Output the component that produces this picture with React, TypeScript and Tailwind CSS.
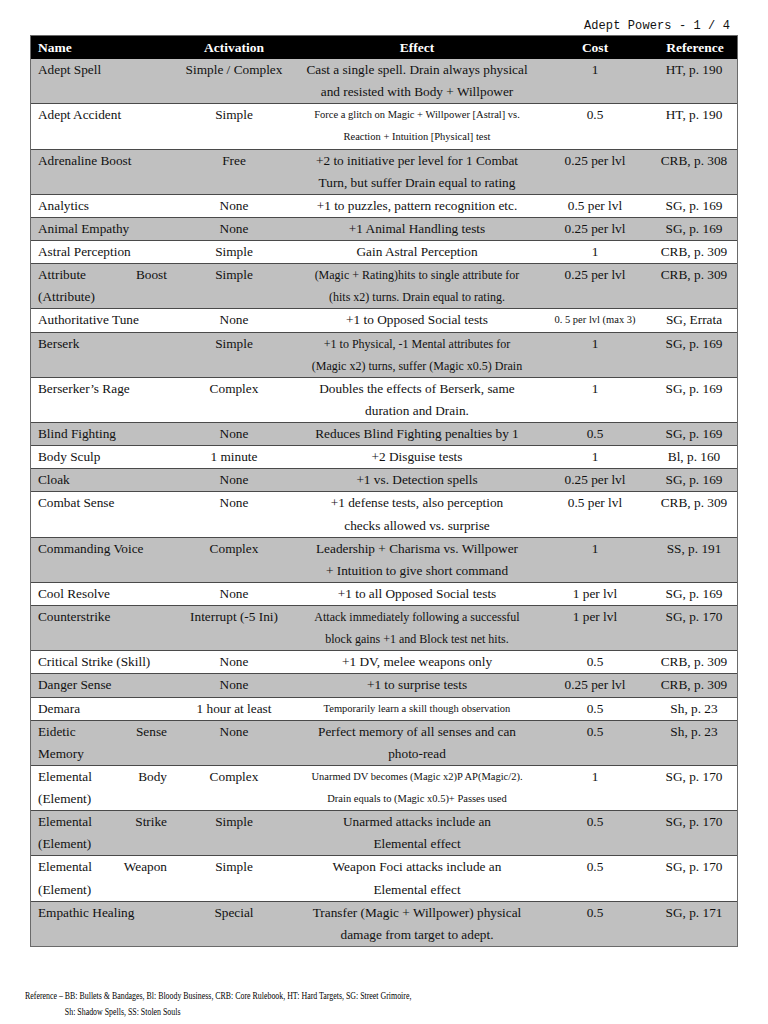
import React from "react";

type Row = {
  name: string | [string, string, string];
  act: string;
  eff: string[];
  effSize?: "sm" | "xs";
  cost: string;
  costSmall?: boolean;
  ref: string;
};

const rows: Row[] = [
  { name: "Adept Spell", act: "Simple / Complex", eff: ["Cast a single spell. Drain always physical", "and resisted with Body + Willpower"], cost: "1", ref: "HT, p. 190" },
  { name: "Adept Accident", act: "Simple", eff: ["Force a glitch on Magic + Willpower [Astral] vs.", "Reaction + Intuition [Physical] test"], effSize: "xs", cost: "0.5", ref: "HT, p. 190" },
  { name: "Adrenaline Boost", act: "Free", eff: ["+2 to initiative per level for 1 Combat", "Turn, but suffer Drain equal to rating"], cost: "0.25 per lvl", ref: "CRB, p. 308" },
  { name: "Analytics", act: "None", eff: ["+1 to puzzles, pattern recognition etc."], cost: "0.5 per lvl", ref: "SG, p. 169" },
  { name: "Animal Empathy", act: "None", eff: ["+1 Animal Handling tests"], cost: "0.25 per lvl", ref: "SG, p. 169" },
  { name: "Astral Perception", act: "Simple", eff: ["Gain Astral Perception"], cost: "1", ref: "CRB, p. 309" },
  { name: ["Attribute", "Boost", "(Attribute)"], act: "Simple", eff: ["(Magic + Rating)hits to single attribute for", "(hits x2) turns. Drain equal to rating."], effSize: "sm", cost: "0.25 per lvl", ref: "CRB, p. 309" },
  { name: "Authoritative Tune", act: "None", eff: ["+1 to Opposed Social tests"], cost: "0. 5 per lvl (max 3)", costSmall: true, ref: "SG, Errata" },
  { name: "Berserk", act: "Simple", eff: ["+1 to Physical, -1 Mental attributes for", "(Magic x2) turns, suffer (Magic x0.5) Drain"], effSize: "sm", cost: "1", ref: "SG, p. 169" },
  { name: "Berserker\u2019s Rage", act: "Complex", eff: ["Doubles the effects of Berserk, same", "duration and Drain."], cost: "1", ref: "SG, p. 169" },
  { name: "Blind Fighting", act: "None", eff: ["Reduces Blind Fighting penalties by 1"], cost: "0.5", ref: "SG, p. 169" },
  { name: "Body Sculp", act: "1 minute", eff: ["+2 Disguise tests"], cost: "1", ref: "Bl, p. 160" },
  { name: "Cloak", act: "None", eff: ["+1 vs. Detection spells"], cost: "0.25 per lvl", ref: "SG, p. 169" },
  { name: "Combat Sense", act: "None", eff: ["+1 defense tests, also perception", "checks allowed vs. surprise"], cost: "0.5 per lvl", ref: "CRB, p. 309" },
  { name: "Commanding Voice", act: "Complex", eff: ["Leadership + Charisma vs. Willpower", "+ Intuition to give short command"], cost: "1", ref: "SS, p. 191" },
  { name: "Cool Resolve", act: "None", eff: ["+1 to all Opposed Social tests"], cost: "1 per lvl", ref: "SG, p. 169" },
  { name: "Counterstrike", act: "Interrupt (-5 Ini)", eff: ["Attack immediately following a successful", "block gains +1 and Block test net hits."], effSize: "sm", cost: "1 per lvl", ref: "SG, p. 170" },
  { name: "Critical Strike (Skill)", act: "None", eff: ["+1 DV, melee weapons only"], cost: "0.5", ref: "CRB, p. 309" },
  { name: "Danger Sense", act: "None", eff: ["+1 to surprise tests"], cost: "0.25 per lvl", ref: "CRB, p. 309" },
  { name: "Demara", act: "1 hour at least", eff: ["Temporarily learn a skill though observation"], effSize: "xs", cost: "0.5", ref: "Sh, p. 23" },
  { name: ["Eidetic", "Sense", "Memory"], act: "None", eff: ["Perfect memory of all senses and can", "photo-read"], cost: "0.5", ref: "Sh, p. 23" },
  { name: ["Elemental", "Body", "(Element)"], act: "Complex", eff: ["Unarmed DV becomes (Magic x2)P AP(Magic/2).", "Drain equals to (Magic x0.5)+ Passes used"], effSize: "xs", cost: "1", ref: "SG, p. 170" },
  { name: ["Elemental", "Strike", "(Element)"], act: "Simple", eff: ["Unarmed attacks include an", "Elemental effect"], cost: "0.5", ref: "SG, p. 170" },
  { name: ["Elemental", "Weapon", "(Element)"], act: "Simple", eff: ["Weapon Foci attacks include an", "Elemental effect"], cost: "0.5", ref: "SG, p. 170" },
  { name: "Empathic Healing", act: "Special", eff: ["Transfer (Magic + Willpower) physical", "damage from target to adept."], cost: "0.5", ref: "SG, p. 171" },
];

const gridCols = "grid grid-cols-[142px_122px_244px_112px_88px]";

function NameCell({ name }: { name: Row["name"] }) {
  if (typeof name === "string") {
    return <div className="pl-[7px] pr-[4px] whitespace-nowrap">{name}</div>;
  }
  return (
    <div className="pl-[7px] pr-[6px]">
      <div className="flex justify-between">
        <span>{name[0]}</span>
        <span>{name[1]}</span>
      </div>
      <div>{name[2]}</div>
    </div>
  );
}

export default function App() {
  return (
    <div
      className="w-[768px] h-[1024px] bg-white text-[#111] relative overflow-hidden"
      style={{ fontFamily: '"Liberation Serif", "Times New Roman", serif' }}
    >
      <div className="pt-[18px] px-[30px]">
        <div
          className="text-right pr-[8px] text-[12px] leading-[16px] tracking-[0.1px] text-[#111]"
          style={{ fontFamily: '"Liberation Mono", monospace' }}
        >
          Adept Powers - 1 / 4
        </div>
        <div className="mt-[1px] w-[708px] border border-[#6a6a6a] text-[13.3px]">
          <div className={`${gridCols} bg-black text-white font-bold leading-[23px] text-[13.5px]`}>
            <div className="pl-[7px]">Name</div>
            <div className="text-center">Activation</div>
            <div className="text-center">Effect</div>
            <div className="text-center">Cost</div>
            <div className="text-center">Reference</div>
          </div>
          {rows.map((r, i) => (
            <div
              key={i}
              className={`${gridCols} leading-[22.12px] ${i % 2 === 0 ? "bg-[#c0c0c0]" : "bg-white"} ${
                i < rows.length - 1 ? "border-b border-[#4a4a4a]" : ""
              }`}
            >
              <NameCell name={r.name} />
              <div className="text-center whitespace-nowrap">{r.act}</div>
              <div
                className={`text-center whitespace-nowrap ${
                  r.effSize === "xs" ? "text-[10.5px]" : r.effSize === "sm" ? "text-[12px]" : ""
                }`}
              >
                {r.eff.map((l, k) => (
                  <div key={k}>{l}</div>
                ))}
              </div>
              <div className={`text-center whitespace-nowrap ${r.costSmall ? "text-[10.5px]" : ""}`}>{r.cost}</div>
              <div className="text-center whitespace-nowrap pr-[2px]">{r.ref}</div>
            </div>
          ))}
        </div>
      </div>
      <div className="mt-[41px] pl-[25px] text-[9.5px] leading-[16px] text-black">
        <div className="origin-left scale-x-[0.83] whitespace-nowrap">
          Reference – BB: Bullets &amp; Bandages, Bl: Bloody Business, CRB: Core Rulebook, HT: Hard Targets, SG: Street Grimoire,
        </div>
        <div className="origin-left scale-x-[0.83] whitespace-nowrap pl-[48px]">Sh: Shadow Spells, SS: Stolen Souls</div>
      </div>
    </div>
  );
}
